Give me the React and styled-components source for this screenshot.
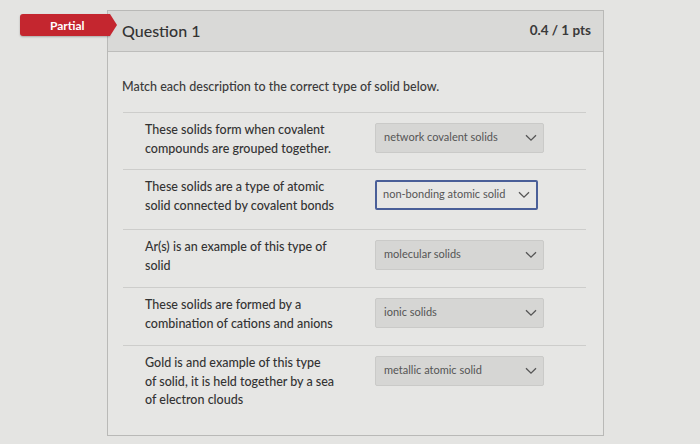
import React from "react";
import styled, { createGlobalStyle } from "styled-components";

const Global = createGlobalStyle`
  html, body { margin: 0; padding: 0; }
  body {
    background: #e4e4e2;
    font-family: Lato, "Open Sans", "Liberation Sans", sans-serif;
    color: #363636;
  }
`;

const Page = styled.div`
  width: 700px;
  height: 444px;
  padding: 10px 0 0 107px;
  box-sizing: border-box;
  overflow: hidden;
`;

const Card = styled.section`
  position: relative;
  width: 497px;
  height: 426px;
  box-sizing: border-box;
  border: 1px solid #b9b9b7;
  background: #e6e6e4;
`;

const Badge = styled.div`
  position: absolute;
  left: -88px;
  top: 3px;
  width: 90px;
  height: 22px;
  background: #c4262f;
  border-radius: 3px 0 0 3px;
  color: #fff;
  font-size: 12px;
  font-weight: 700;
  display: flex;
  align-items: center;
  padding-left: 30px;
  box-sizing: border-box;
  box-shadow: 0 1px 2px rgba(0,0,0,0.25);
  &::after {
    content: "";
    position: absolute;
    right: -7px;
    top: 0;
    border-style: solid;
    border-width: 11px 0 11px 7px;
    border-color: transparent transparent transparent #c4262f;
  }
`;

const Header = styled.header`
  height: 41px;
  background: #d9d9d7;
  border-bottom: 1px solid #bdbdbb;
  display: flex;
  align-items: center;
  justify-content: space-between;
  padding: 0 12px 2px 14px;
  box-sizing: border-box;
`;

const Title = styled.h2`
  margin: 0;
  font-size: 16px;
  font-weight: 500;
  color: #333;
`;

const Points = styled.span`
  font-size: 13.5px;
  font-weight: 700;
  color: #3a3a3a;
`;

const Body = styled.div`
  padding: 27px 15px 0 14px;
`;

const Prompt = styled.p`
  margin: 0 0 17px;
  font-size: 12.5px;
  font-weight: 500;
  line-height: 16px;
  color: #3a3a3a;
`;

const List = styled.div`
  margin-left: 1px;
  margin-right: 2px;
`;

const Row = styled.div`
  border-top: 1px solid #cdcdcb;
  height: ${(p) => p.$h}px;
  display: grid;
  grid-template-columns: 230px 170px;
  padding: 8px 0 0 22px;
  box-sizing: border-box;
`;

const Desc = styled.div`
  font-size: 12.5px;
  font-weight: 500;
  line-height: 18.5px;
  color: #333;
  width: 195px;
`;

const Select = styled.div`
  margin-top: 2px;
  width: ${(p) => (p.$focused ? 163 : 169)}px;
  height: 30px;
  box-sizing: border-box;
  background: ${(p) => (p.$focused ? "#e7e7e5" : "#d6d6d4")};
  border: ${(p) => (p.$focused ? "2px solid #4a5f98" : "1px solid #cacac8")};
  border-radius: 2px;
  display: flex;
  align-items: center;
  justify-content: space-between;
  padding: 0 6px 4px ${(p) => (p.$focused ? 6 : 8)}px;
  font-size: 11px;
  color: #555;
`;

const Chevron = () => (
  <svg width="12" height="8" viewBox="0 0 12 8" style={{ marginTop: 4 }}>
    <path d="M1 1.2 L6 6.2 L11 1.2" fill="none" stroke="#555" strokeWidth="1.3" />
  </svg>
);

const rows = [
  { d: ["These solids form when covalent", "compounds are grouped together."], a: "network covalent solids", h: 57 },
  { d: ["These solids are a type of atomic", "solid connected by covalent bonds"], a: "non-bonding atomic solid", h: 60, f: true },
  { d: ["Ar(s) is an example of this type of", "solid"], a: "molecular solids", h: 58 },
  { d: ["These solids are formed by a", "combination of cations and anions"], a: "ionic solids", h: 58 },
  { d: ["Gold is and example of this type", "of solid, it is held together by a sea", "of electron clouds"], a: "metallic atomic solid", h: 80 },
];

export default function App() {
  return (
    <>
      <Global />
      <Page>
        <Card>
          <Badge>Partial</Badge>
          <Header>
            <Title>Question 1</Title>
            <Points>0.4 / 1 pts</Points>
          </Header>
          <Body>
            <Prompt>Match each description to the correct type of solid below.</Prompt>
            <List>
              {rows.map((r, i) => (
                <Row key={i} $h={r.h}>
                  <Desc>
                    {r.d.map((l, j) => (
                      <div key={j}>{l}</div>
                    ))}
                  </Desc>
                  <Select $focused={r.f}>
                    <span>{r.a}</span>
                    <Chevron />
                  </Select>
                </Row>
              ))}
            </List>
          </Body>
        </Card>
      </Page>
    </>
  );
}
